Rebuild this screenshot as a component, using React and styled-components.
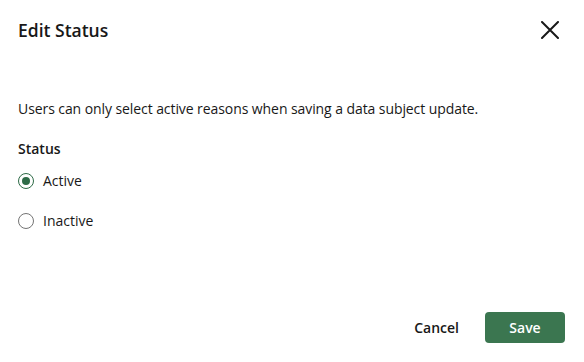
import React, { useState } from "react";
import styled, { createGlobalStyle } from "styled-components";

const Global = createGlobalStyle`
  html, body { margin: 0; padding: 0; background: #fff; }
  body { font-family: "Open Sans", "Noto Sans", sans-serif; color: #181818; }
`;

const Dialog = styled.div`
  width: 584px;
  height: 362px;
  box-sizing: border-box;
  display: flex;
  flex-direction: column;
  background: #fff;
`;

const Header = styled.div`
  display: flex;
  align-items: center;
  justify-content: space-between;
  padding: 18px 22px 0 18px;
  height: 42px;
  box-sizing: border-box;
`;

const Title = styled.h2`
  margin: 0;
  font-size: 17.5px;
  font-weight: 600;
  line-height: 24px;
  color: #181818;
`;

const CloseButton = styled.button`
  border: none;
  background: none;
  padding: 0;
  width: 24px;
  height: 24px;
  display: flex;
  align-items: center;
  justify-content: center;
  cursor: pointer;
  color: #181818;
`;

const Body = styled.div`
  flex: 1;
  padding: 57px 18px 0 18px;
  display: flex;
  flex-direction: column;
`;

const Description = styled.p`
  margin: 0;
  font-size: 14px;
  line-height: 20px;
  letter-spacing: -0.08px;
  color: #181818;
`;

const Fieldset = styled.div`
  margin-top: 20px;
  display: flex;
  flex-direction: column;
`;

const Legend = styled.div`
  font-size: 14px;
  font-weight: 600;
  line-height: 20px;
`;

const Options = styled.div`
  display: flex;
  flex-direction: column;
  gap: 20px;
  margin-top: 12px;
`;

const Option = styled.label`
  display: flex;
  align-items: center;
  gap: 9px;
  font-size: 14px;
  line-height: 20px;
  cursor: pointer;
`;

const Circle = styled.span`
  width: 16px;
  height: 16px;
  box-sizing: border-box;
  border-radius: 50%;
  border: 1px solid ${(p) => (p.$checked ? "#2e6b47" : "#747474")};
  display: flex;
  align-items: center;
  justify-content: center;
  &::after {
    content: "";
    width: 8px;
    height: 8px;
    border-radius: 50%;
    background: ${(p) => (p.$checked ? "#2e6b47" : "transparent")};
  }
`;

const Footer = styled.div`
  display: flex;
  justify-content: flex-end;
  align-items: center;
  gap: 26px;
  padding: 0 19px 19px 0;
`;

const TextButton = styled.button`
  border: none;
  background: none;
  font-family: inherit;
  font-size: 14px;
  font-weight: 600;
  color: #181818;
  padding: 0;
  cursor: pointer;
`;

const PrimaryButton = styled.button`
  border: none;
  background: #3b7650;
  color: #fff;
  font-family: inherit;
  font-size: 14px;
  font-weight: 600;
  width: 80px;
  height: 31px;
  border-radius: 4px;
  cursor: pointer;
`;

export default function App() {
  const [status, setStatus] = useState("active");
  return (
    <>
      <Global />
      <Dialog>
        <Header>
          <Title>Edit Status</Title>
          <CloseButton aria-label="Close">
            <svg width="18" height="18" viewBox="0 0 18 18">
              <path d="M1 1L17 17M17 1L1 17" stroke="#181818" strokeWidth="2" strokeLinecap="round" />
            </svg>
          </CloseButton>
        </Header>
        <Body>
          <Description>
            Users can only select active reasons when saving a data subject update.
          </Description>
          <Fieldset>
            <Legend>Status</Legend>
            <Options>
              {[
                ["active", "Active"],
                ["inactive", "Inactive"],
              ].map(([v, l]) => (
                <Option key={v} onClick={() => setStatus(v)}>
                  <Circle $checked={status === v} />
                  {l}
                </Option>
              ))}
            </Options>
          </Fieldset>
        </Body>
        <Footer>
          <TextButton>Cancel</TextButton>
          <PrimaryButton>Save</PrimaryButton>
        </Footer>
      </Dialog>
    </>
  );
}
